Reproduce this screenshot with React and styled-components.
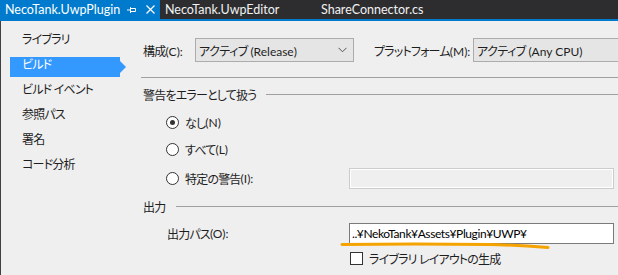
import React from "react";
import styled, { createGlobalStyle, css } from "styled-components";

const Global = createGlobalStyle`
  html, body { margin: 0; padding: 0; background: #efefef; overflow: hidden; }
  body {
    font-family: "Lato", "Noto Sans CJK JP", sans-serif;
    font-size: 12px;
    color: #1e1e1e;
  }
  * { box-sizing: border-box; font-feature-settings: "palt" 1; }
`;

const jp = css`
  letter-spacing: -0.8px;
`;

const Key = styled.span`
  letter-spacing: 0;
  font-size: 12px;
`;

const Page = styled.div`
  width: 618px;
  height: 275px;
  display: flex;
  flex-direction: column;
  position: relative;
  overflow: hidden;
`;

const TabBar = styled.div`
  height: 21px;
  background: #2d2d30;
  border-bottom: 2px solid #007acc;
  display: flex;
  flex-shrink: 0;
`;

const Tab = styled.div`
  width: ${(p) => p.$w || "auto"};
  height: 19px;
  padding: 0 0 0 5px;
  display: flex;
  align-items: center;
  background: ${(p) => (p.$active ? "#007acc" : "transparent")};
  color: ${(p) => (p.$active ? "#ffffff" : "#f1f1f1")};
  font-size: 12.5px;
  white-space: nowrap;
  line-height: 19px;
`;

const TabLabel = styled.span`
  flex: 1;
`;

const TabIcons = styled.span`
  display: flex;
  align-items: center;
  gap: 10px;
  margin-right: 5px;
`;

const Body = styled.div`
  flex: 1;
  display: flex;
  border-left: 1px solid #3f3f46;
`;

const Nav = styled.div`
  width: 140px;
  flex-shrink: 0;
  padding-top: 11px;
  display: flex;
  flex-direction: column;
  gap: 5px;
`;

const NavItem = styled.div`
  ${jp}
  position: relative;
  margin-left: 9px;
  width: 110px;
  height: 20px;
  padding-left: 12px;
  line-height: 16px;
  color: ${(p) => (p.$selected ? "#ffffff" : "#1e1e1e")};
  background: ${(p) => (p.$selected ? "#3399ff" : "transparent")};
  &::after {
    content: "";
    display: ${(p) => (p.$selected ? "block" : "none")};
    position: absolute;
    right: -6px;
    top: 4px;
    border-top: 6px solid transparent;
    border-bottom: 6px solid transparent;
    border-left: 6px solid #3399ff;
  }
`;

const Content = styled.div`
  flex: 1;
  display: flex;
  flex-direction: column;
  min-width: 0;
`;

const ConfigRow = styled.div`
  margin-top: 17px;
  height: 24px;
  display: flex;
  align-items: center;
  white-space: nowrap;
`;

const FieldLabel = styled.span`
  ${jp}
  width: ${(p) => p.$w};
  padding-left: ${(p) => p.$pl || "2px"};
  margin-left: ${(p) => p.$ml || "0"};
  flex-shrink: 0;
`;

const Select = styled.div`
  width: ${(p) => p.$w};
  flex-shrink: 0;
  height: 24px;
  background: #e5e5e5;
  border: 1px solid #acacac;
  display: flex;
  align-items: center;
  padding-left: 3px;
  padding-right: 6px;
  justify-content: space-between;
  letter-spacing: -0.5px;
`;

const Separator = styled.div`
  height: 1px;
  background: #a0a0a0;
  margin-top: 15px;
`;

const SectionHeader = styled.div`
  ${jp}
  margin-top: ${(p) => p.$mt};
  height: 16px;
  display: flex;
  align-items: center;
  padding-left: 2px;
  &::after {
    content: "";
    flex: 1;
    height: 1px;
    background: #a0a0a0;
    margin-left: ${(p) => p.$gap};
  }
`;

const RadioList = styled.div`
  display: flex;
  flex-direction: column;
  margin-top: 9px;
  gap: 5px;
  padding-left: 25px;
  padding-right: 4px;
`;

const RadioRow = styled.div`
  ${jp}
  height: 22px;
  display: flex;
  align-items: center;
  margin-top: ${(p) => p.$mt || "0"};
`;

const Radio = styled.span`
  width: 13px;
  height: 13px;
  border-radius: 50%;
  border: 1px solid #333;
  background: #fff;
  display: flex;
  align-items: center;
  justify-content: center;
  margin-right: 6px;
  &::after {
    content: "";
    width: 5px;
    height: 5px;
    border-radius: 50%;
    background: #333;
    display: ${(p) => (p.$checked ? "block" : "none")};
  }
`;

const TextBox = styled.div`
  margin-left: auto;
  width: 265px;
  height: 21px;
  border: 1px solid ${(p) => (p.$disabled ? "#cccccc" : "#7a7a7a")};
  background: ${(p) => (p.$disabled ? "#efefef" : "#ffffff")};
  box-shadow: ${(p) => (p.$disabled ? "inset 0 0 0 1px #ffffff" : "none")};
  padding-left: 2px;
  line-height: 19px;
  white-space: nowrap;
  overflow: hidden;
  color: #000;
  font-size: 12px;
  letter-spacing: -0.4px;
`;

const PathRow = styled.div`
  ${jp}
  margin-top: 9px;
  height: 21px;
  display: flex;
  align-items: center;
  padding-left: 26px;
  padding-right: 4px;
`;

const CheckRow = styled.div`
  ${jp}
  margin-top: 7px;
  height: 14px;
  display: flex;
  align-items: center;
  padding-left: 209px;
`;

const CheckBox = styled.span`
  width: 13px;
  height: 13px;
  border: 1px solid #333;
  background: #fff;
  margin-right: 6px;
`;

const Annotation = styled.svg`
  position: absolute;
  left: 0;
  top: 0;
  pointer-events: none;
`;

const Chevron = () => (
  <svg width="9" height="6" viewBox="0 0 9 6">
    <path d="M0.5 0.8 L4.5 4.8 L8.5 0.8" fill="none" stroke="#555" strokeWidth="1" />
  </svg>
);

const PinIcon = () => (
  <svg width="9" height="8" viewBox="0 0 9 8">
    <path d="M0 4 H3 M3.5 1 V7 M3.5 2.5 H8.5 V5.5 H3.5" fill="none" stroke="#fff" strokeWidth="1" />
  </svg>
);

const CloseIcon = () => (
  <svg width="9" height="9" viewBox="0 0 9 9">
    <path d="M0.5 0.5 L8.5 8.5 M8.5 0.5 L0.5 8.5" fill="none" stroke="#fff" strokeWidth="1.2" />
  </svg>
);

export default function App() {
  return (
    <>
      <Global />
      <Page>
        <TabBar>
          <Tab $active $w="160px">
            <TabLabel>NecoTank.UwpPlugin</TabLabel>
            <TabIcons>
              <PinIcon />
              <CloseIcon />
            </TabIcons>
          </Tab>
          <Tab $w="156px">
            <TabLabel>NecoTank.UwpEditor</TabLabel>
          </Tab>
          <Tab>
            <TabLabel>ShareConnector.cs</TabLabel>
          </Tab>
        </TabBar>
        <Body>
          <Nav>
            <NavItem>ライブラリ</NavItem>
            <NavItem $selected>ビルド</NavItem>
            <NavItem>ビルド イベント</NavItem>
            <NavItem>参照パス</NavItem>
            <NavItem>署名</NavItem>
            <NavItem>コード分析</NavItem>
          </Nav>
          <Content>
            <ConfigRow>
              <FieldLabel $w="54px">構成<Key>(C):</Key></FieldLabel>
              <Select $w="159px">
                <span>アクティブ <Key>(Release)</Key></span>
                <Chevron />
              </Select>
              <FieldLabel $w="99px" $ml="20px" $pl="0">プラットフォーム<Key>(M):</Key></FieldLabel>
              <Select $w="170px">
                <span>アクティブ <Key>(Any CPU)</Key></span>
              </Select>
            </ConfigRow>
            <Separator />
            <SectionHeader $mt="8px" $gap="10px">警告をエラーとして扱う</SectionHeader>
            <RadioList>
              <RadioRow>
                <Radio $checked />
                なし<Key>(N)</Key>
              </RadioRow>
              <RadioRow>
                <Radio />
                すべて<Key>(L)</Key>
              </RadioRow>
              <RadioRow $mt="2px">
                <Radio />
                特定の警告<Key>(I):</Key>
                <TextBox $disabled />
              </RadioRow>
            </RadioList>
            <SectionHeader $mt="9px" $gap="11px">出力</SectionHeader>
            <PathRow>
              出力パス<Key>(O):</Key>
              <TextBox>..¥NekoTank¥Assets¥Plugin¥UWP¥</TextBox>
            </PathRow>
            <CheckRow>
              <CheckBox />
              ライブラリ レイアウトの生成
            </CheckRow>
          </Content>
        </Body>
        <Annotation width="618" height="275">
          <path
            d="M342 244.5 C 380 244, 450 244, 488 244.5 C 515 245, 535 246.5, 548 247.5"
            fill="none"
            stroke="#f5a300"
            strokeWidth="3"
            strokeLinecap="round"
          />
        </Annotation>
      </Page>
    </>
  );
}
